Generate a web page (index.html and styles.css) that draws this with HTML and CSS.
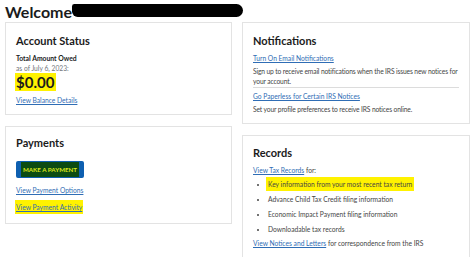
FILE: index.html
```html
<!DOCTYPE html>
<html>
    <head>
        <title>Account Home</title>
        <link rel="stylesheet" href="styles.css">
    </head>
    <body>
        <h1 class="welcome">Welcome<span class="redacted"></span></h1>

        <div class="columns">
            <div class="column">
                <div class="card status">
                    <h2>Account Status</h2>
                    <p class="owed-label">Total Amount Owed</p>
                    <p class="owed-date">as of July 6, 2023:</p>
                    <p class="owed-amount"><span class="marker">$0.00</span></p>
                    <p class="link-row"><a href="#">View Balance Details</a></p>
                </div>

                <div class="card payments">
                    <h2>Payments</h2>
                    <button class="pay-button"><span class="marker-dark">MAKE A PAYMENT</span></button>
                    <p class="link-row"><a href="#">View Payment Options</a></p>
                    <p class="link-row activity"><a href="#" class="marker">View Payment Activity</a></p>
                </div>
            </div>

            <div class="column">
                <div class="card notifications">
                    <h2>Notifications</h2>
                    <div class="notice">
                        <a href="#">Turn On Email Notifications</a>
                        <p>Sign up to receive email notifications when the IRS issues new notices for your account.</p>
                    </div>
                    <div class="notice">
                        <a href="#">Go Paperless for Certain IRS Notices</a>
                        <p>Set your profile preferences to receive IRS notices online.</p>
                    </div>
                </div>

                <div class="card records">
                    <h2>Records</h2>
                    <p><a href="#">View Tax Records</a> for:</p>
                    <ul>
                        <li><span class="marker">Key information from your most recent tax return</span></li>
                        <li>Advance Child Tax Credit filing information</li>
                        <li>Economic Impact Payment filing information</li>
                        <li>Downloadable tax records</li>
                    </ul>
                    <p><a href="#">View Notices and Letters</a> for correspondence from the IRS</p>
                </div>
            </div>
        </div>
    </body>
</html>
```

FILE: styles.css
```css
html {
    font-family: Lato, "Liberation Sans", Arial, sans-serif;
    color: #454545;
}
body {
    margin: 0;
    padding: 3px 4px 0 5px;
    background: #fff;
}
p {
    margin: 0;
}
a {
    color: #2f6db5;
    text-decoration: underline;
}
.welcome {
    margin: 0;
    font-size: 16px;
    line-height: 17px;
    font-weight: bold;
    color: #1b1b1b;
    height: 19px;
}
.redacted {
    display: inline-block;
    vertical-align: top;
    margin-top: 1px;
    width: 171px;
    height: 13px;
    background: #000;
    border-radius: 3px 8px 8px 7px;
}
.columns {
    display: grid;
    grid-template-columns: 227px 228px;
    column-gap: 10px;
}
.column {
    display: flex;
    flex-direction: column;
    gap: 11px;
}
.card {
    border: 1px solid #e3e3e3;
    padding: 11px 10px 9px 10px;
    font-size: 6.7px;
    line-height: 10px;
}
.card h2 {
    margin: 0;
    font-size: 11px;
    line-height: 14px;
    font-weight: bold;
    color: #1b1b1b;
}
.marker {
    background: #fff200;
}
.owed-label {
    margin-top: 5px;
    font-weight: bold;
    font-size: 6.8px;
    color: #1b1b1b;
}
.owed-date {
    color: #71767a;
}
.owed-amount {
    font-size: 15px;
    line-height: 18px;
    font-weight: bold;
    color: #1b1b1b;
}
.owed-amount .marker {
    display: inline-block;
    padding: 0 2px 0 1px;
    margin-left: -1px;
}
.status .link-row {
    margin-top: 4px;
}
.payments {
    padding-top: 9px;
    padding-bottom: 11px;
}
.pay-button {
    display: block;
    margin-top: 11px;
    width: 68px;
    height: 17px;
    padding: 0;
    border: 0;
    border-radius: 2px;
    background: #0e5fb0;
    font-family: inherit;
    font-size: 6.2px;
    font-weight: bold;
    text-align: center;
}
.marker-dark {
    display: inline-block;
    background: #0c4c12;
    color: #dde81c;
    padding: 3px 2px;
    line-height: 9px;
}
.payments .link-row {
    margin-top: 7px;
}
.payments .activity {
    margin-top: 7px;
}
.payments .activity a {
    padding: 3px 1px;
    margin-left: -1px;
}
.notice {
    margin-top: 5px;
}
.notice p {
    margin-top: 3px;
    letter-spacing: -0.13px;
}
.notice + .notice {
    border-top: 1px solid #dcdcdc;
    margin-top: 1px;
    padding-top: 3px;
}
.records {
    padding-top: 10px;
    padding-bottom: 10px;
}
.records > p {
    margin-top: 5px;
}
.records ul {
    margin: 2px 0 1px 0;
    padding-left: 15px;
}
.records li {
    line-height: 15px;
}
.records li .marker {
    padding: 3px 2px;
    margin-left: -2px;
}
.records ul + p {
    margin-top: 1px;
}
```
